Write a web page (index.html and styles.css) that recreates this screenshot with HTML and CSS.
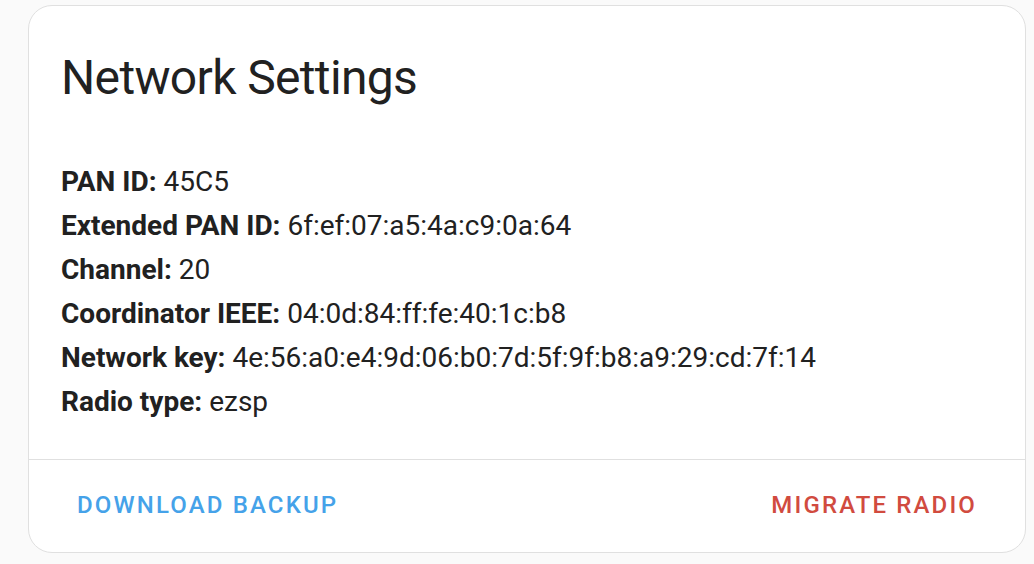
FILE: index.html
```html
<!DOCTYPE html>
<html lang="en">
<head>
<meta charset="utf-8">
<title>Network Settings</title>
<link rel="stylesheet" href="styles.css">
</head>
<body>
<div class="card">
  <h1 class="card-header">Network Settings</h1>
  <div class="card-content">
    <div class="row"><strong>PAN ID:</strong> 45C5</div>
    <div class="row"><strong>Extended PAN ID:</strong> 6f:ef:07:a5:4a:c9:0a:64</div>
    <div class="row"><strong>Channel:</strong> 20</div>
    <div class="row"><strong>Coordinator IEEE:</strong> 04:0d:84:ff:fe:40:1c:b8</div>
    <div class="row"><strong>Network key:</strong> 4e:56:a0:e4:9d:06:b0:7d:5f:9f:b8:a9:29:cd:7f:14</div>
    <div class="row"><strong>Radio type:</strong> ezsp</div>
  </div>
  <div class="card-actions">
    <button class="btn btn-primary">Download backup</button>
    <button class="btn btn-danger">Migrate radio</button>
  </div>
</div>
</body>
</html>
```
FILE: styles.css
```css
* { box-sizing: border-box; }
html, body { margin: 0; padding: 0; }
body {
  background: #fafafa;
  font-family: Roboto, "Noto Sans", sans-serif;
  color: #212121;
  width: 1034px;
  height: 564px;
  overflow: hidden;
}
.card {
  margin: 5px 8px 0 28px;
  width: 998px;
  height: 548px;
  background: #fff;
  border: 1px solid #e0e0e0;
  border-radius: 24px;
  display: flex;
  flex-direction: column;
}
.card-header {
  margin: 0;
  padding: 40px 32px 0;
  font-size: 48px;
  font-weight: 400;
  line-height: 64px;
  letter-spacing: -0.65px;
}
.card-content {
  padding: 50px 32px 34px;
  font-size: 28px;
  line-height: 44px;
  flex: 1;
}
.row strong { font-weight: 700; }
.card-actions {
  border-top: 1px solid #e0e0e0;
  display: flex;
  justify-content: space-between;
  align-items: center;
  height: 93px;
  padding: 0 32px 2px 32px;
}
.btn {
  background: none;
  border: 0;
  font-family: Roboto, "Noto Sans", sans-serif;
  font-size: 24px;
  font-weight: 500;
  letter-spacing: 2.14px;
  text-transform: uppercase;
  padding: 8px 16px;
  line-height: 32px;
}
.btn-primary { color: #45a2e9; }
.btn-danger { color: #d14b3f; }
```
